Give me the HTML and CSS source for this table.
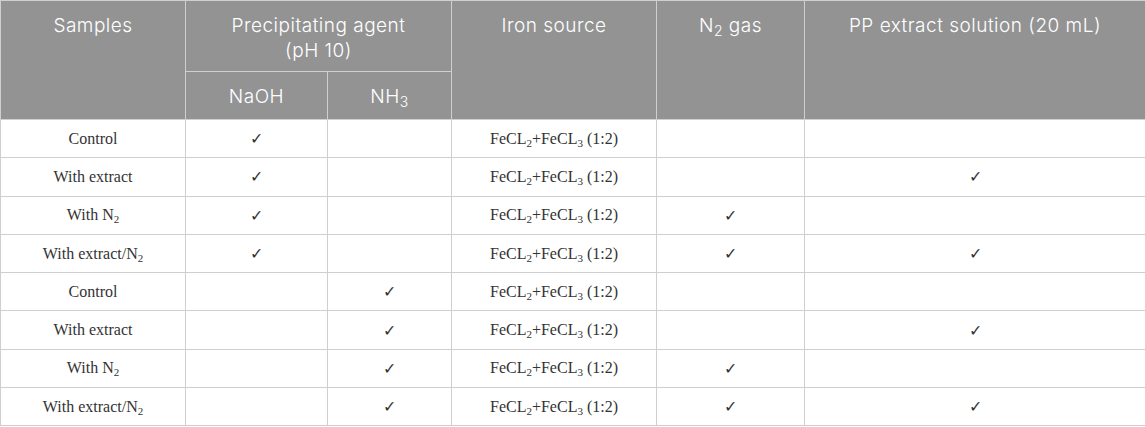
FILE: index.html
```html
<!DOCTYPE html>
<html>
<head>
<meta charset="utf-8">
<link rel="stylesheet" href="styles.css">
</head>
<body>
<table class="data">
  <colgroup>
    <col class="c1"><col class="c2"><col class="c3"><col class="c4"><col class="c5"><col class="c6">
  </colgroup>
  <thead>
    <tr class="h1">
      <th rowspan="2">Samples</th>
      <th colspan="2">Precipitating agent<br>(pH 10)</th>
      <th rowspan="2">Iron source</th>
      <th rowspan="2">N<sub>2</sub> gas</th>
      <th rowspan="2">PP extract solution (20 mL)</th>
    </tr>
    <tr class="h2">
      <th class="sub">NaOH</th>
      <th class="sub">NH<sub>3</sub></th>
    </tr>
  </thead>
  <tbody>
    <tr><td>Control</td><td>✓</td><td></td><td>FeCL<sub>2</sub>+FeCL<sub>3</sub> (1:2)</td><td></td><td></td></tr>
    <tr><td>With extract</td><td>✓</td><td></td><td>FeCL<sub>2</sub>+FeCL<sub>3</sub> (1:2)</td><td></td><td>✓</td></tr>
    <tr><td>With N<sub>2</sub></td><td>✓</td><td></td><td>FeCL<sub>2</sub>+FeCL<sub>3</sub> (1:2)</td><td>✓</td><td></td></tr>
    <tr><td>With extract/N<sub>2</sub></td><td>✓</td><td></td><td>FeCL<sub>2</sub>+FeCL<sub>3</sub> (1:2)</td><td>✓</td><td>✓</td></tr>
    <tr><td>Control</td><td></td><td>✓</td><td>FeCL<sub>2</sub>+FeCL<sub>3</sub> (1:2)</td><td></td><td></td></tr>
    <tr><td>With extract</td><td></td><td>✓</td><td>FeCL<sub>2</sub>+FeCL<sub>3</sub> (1:2)</td><td></td><td>✓</td></tr>
    <tr><td>With N<sub>2</sub></td><td></td><td>✓</td><td>FeCL<sub>2</sub>+FeCL<sub>3</sub> (1:2)</td><td>✓</td><td></td></tr>
    <tr><td>With extract/N<sub>2</sub></td><td></td><td>✓</td><td>FeCL<sub>2</sub>+FeCL<sub>3</sub> (1:2)</td><td>✓</td><td>✓</td></tr>
  </tbody>
</table>
</body>
</html>
```
FILE: styles.css
```css
html, body {
  margin: 0;
  padding: 0;
  background: #ffffff;
}
.data {
  border-collapse: collapse;
  table-layout: fixed;
  width: 1145px;
}
.c1 { width: 185px; }
.c2 { width: 142px; }
.c3 { width: 124px; }
.c4 { width: 205px; }
.c5 { width: 148px; }
.c6 { width: 341px; }
.data th, .data td {
  border: 1px solid #cfcfcf;
  text-align: center;
  padding: 0;
}
.data th {
  background: #939393;
  color: #ffffff;
  font-family: Inter, "Open Sans", sans-serif;
  font-weight: 300;
  font-size: 19px;
  letter-spacing: 0.5px;
  line-height: 25px;
  vertical-align: top;
  padding-top: 12px;
}
.h1 th { height: 58px; }
.h2 th.sub { height: 35px; padding-top: 12px; }
.data th sub {
  font-size: 14px;
  vertical-align: -4px;
  line-height: 0;
}
.data td {
  font-family: "Liberation Serif", "Times New Roman", serif;
  font-size: 16px;
  color: #333333;
  height: 37.3px;
  vertical-align: middle;
}
.data td sub {
  font-size: 11px;
  vertical-align: -3px;
  line-height: 0;
}
```
